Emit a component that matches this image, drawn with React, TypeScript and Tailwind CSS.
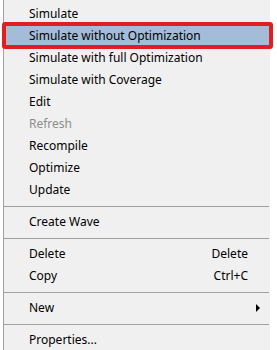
type Entry =
  | { kind: 'item'; label: string; shortcut?: string; disabled?: boolean; active?: boolean; submenu?: boolean }
  | { kind: 'sep' }

const ENTRIES: Entry[] = [
  { kind: 'item', label: 'Simulate' },
  { kind: 'item', label: 'Simulate without Optimization', active: true },
  { kind: 'item', label: 'Simulate with full Optimization' },
  { kind: 'item', label: 'Simulate with Coverage' },
  { kind: 'item', label: 'Edit' },
  { kind: 'item', label: 'Refresh', disabled: true },
  { kind: 'item', label: 'Recompile' },
  { kind: 'item', label: 'Optimize' },
  { kind: 'item', label: 'Update' },
  { kind: 'sep' },
  { kind: 'item', label: 'Create Wave' },
  { kind: 'sep' },
  { kind: 'item', label: 'Delete', shortcut: 'Delete' },
  { kind: 'item', label: 'Copy', shortcut: 'Ctrl+C' },
  { kind: 'sep' },
  { kind: 'item', label: 'New', submenu: true },
  { kind: 'sep' },
  { kind: 'item', label: 'Properties...' },
]

export default function App() {
  return (
    <div className="relative w-[277px] h-[350px] overflow-hidden bg-white font-['Noto_Sans',sans-serif] text-[12px] text-black">
      <div className="ml-[3px] w-[267px] h-full border-l border-[#a0a0a0] bg-[#f0f0f0] pt-[3px]">
        {ENTRIES.map((entry, i) => {
          if (entry.kind === 'sep') {
            return (
              <div key={i} className="h-[10px] flex items-center">
                <div className="w-[265px] h-px bg-[#a0a0a0]" />
              </div>
            )
          }
          return (
            <div
              key={i}
              className={`relative h-[22px] flex items-center pl-[25px] pr-[22px] ${
                entry.active ? 'bg-[#a3bcd8]' : ''
              } ${entry.disabled ? 'text-[#8d8d8d]' : ''}`}
            >
              <span className="flex-1 leading-none">{entry.label}</span>
              {entry.shortcut && <span className="leading-none">{entry.shortcut}</span>}
              {entry.submenu && (
                <span className="absolute left-[252px] top-[7px] w-0 h-0 border-y-[4px] border-y-transparent border-l-[4px] border-l-black" />
              )}
            </div>
          )
        })}
      </div>
      {/* annotation box around the hovered row */}
      <div className="absolute left-[2px] top-[22px] w-[271px] h-[27px] border-[4px] border-[#e02020] rounded-[3px]" />
    </div>
  )
}
